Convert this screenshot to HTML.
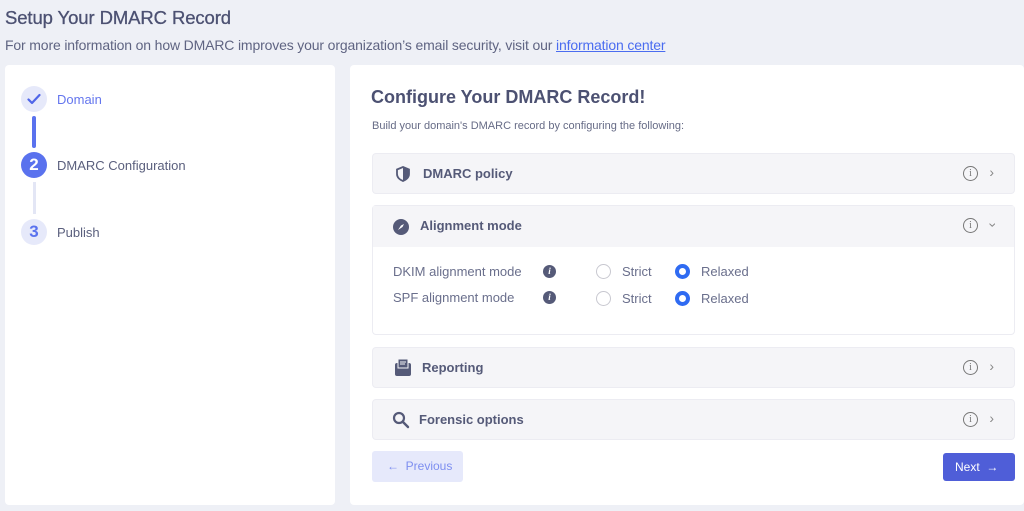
<!DOCTYPE html>
<html><head><meta charset="utf-8"><style>
*{box-sizing:border-box;margin:0;padding:0}
body{width:1024px;height:511px;background:#eef0f6;font-family:"Liberation Sans",sans-serif;color:#5a5f7d;position:relative;overflow:hidden}
.abs{position:absolute}
h1{position:absolute;left:5px;top:7px;font-size:18.5px;font-weight:normal;color:#4c5172;letter-spacing:-0.1px;-webkit-text-stroke:0.3px #4c5172}
.sub{position:absolute;left:5px;top:37px;font-size:14px;color:#5f6482;letter-spacing:-0.15px}
.sub a{color:#4a6cf0;text-decoration:underline}
.panel{position:absolute;background:#fff;border-radius:4px}
.step{position:absolute;left:21px;width:26px;height:26px;border-radius:50%;display:flex;align-items:center;justify-content:center;font-size:17px;font-weight:bold}
.slab{position:absolute;left:57px;font-size:13px;color:#5a5f7d}
.acc{position:absolute;left:372px;width:643px;background:#f5f5f8;border:1px solid #ececf2;border-radius:4px}
.acc .t{position:absolute;top:12px;font-size:13px;font-weight:bold;color:#555a78}
.info{position:absolute;right:36px;top:12px;width:15px;height:15px;border:1px solid #777;border-radius:50%;font-size:10px;text-align:center;line-height:13px;color:#777;font-family:"Liberation Serif",serif}
.chev{position:absolute;right:20px;top:10px;font-size:14px;color:#888}
.row{position:absolute;font-size:13px;color:#6a6f8c}
.ic{position:absolute;width:13px;height:13px;border-radius:50%;background:#555a78;color:#fff;font-size:9px;font-weight:bold;text-align:center;line-height:13px;font-style:italic;font-family:"Liberation Serif",serif}
.r{position:absolute;width:15px;height:15px;border-radius:50%}
.off{border:1px solid #c8c8d0;background:#fff}
.on{border:4px solid #2f6bf2;background:#fff}
</style></head><body>
<h1>Setup Your DMARC Record</h1>
<div class="sub">For more information on how DMARC improves your organization’s email security, visit our <a>information center</a></div>

<div class="panel" style="left:5px;top:65px;width:330px;height:440px"></div>
<div class="step" style="top:86px;background:#e6e9fa;color:#5a72ee">
<svg width="14" height="12" viewBox="0 0 14 12"><path d="M1.5 6.5 L5 10 L12.5 2" stroke="#5066e8" stroke-width="2.2" fill="none" stroke-linecap="round" stroke-linejoin="round"/></svg></div>
<div class="slab" style="top:92px;color:#6476ee">Domain</div>
<div class="abs" style="left:32px;top:116px;width:4px;height:32px;background:#5a72ee;border-radius:2px"></div>
<div class="step" style="top:152px;background:#5a72ee;color:#fff">2</div>
<div class="slab" style="top:158px">DMARC Configuration</div>
<div class="abs" style="left:33px;top:182px;width:3px;height:32px;background:#e3e6f5"></div>
<div class="step" style="top:219px;background:#e6e9fa;color:#5a72ee">3</div>
<div class="slab" style="top:225px">Publish</div>

<div class="panel" style="left:350px;top:65px;width:674px;height:440px"></div>
<div class="abs" style="left:371px;top:87px;font-size:18px;font-weight:bold;color:#4c5172">Configure Your DMARC Record!</div>
<div class="abs" style="left:372px;top:120px;font-size:11px;color:#666b86">Build your domain's DMARC record by configuring the following:</div>

<div class="acc" style="top:153px;height:41px">
<svg class="abs" style="left:23px;top:12px" width="14" height="16" viewBox="0 0 14 16"><path d="M7 1 L13 3.5 V8 C13 11.5 10 14 7 15 C4 14 1 11.5 1 8 V3.5 Z" fill="none" stroke="#555a78" stroke-width="1.8"/><path d="M7 1 L13 3.5 V8 C13 11.5 10 14 7 15 Z" fill="#555a78"/></svg>
<div class="t" style="left:50px">DMARC policy</div><div class="info">i</div><div class="chev">›</div></div>

<div class="acc" style="top:205px;height:130px;background:#fff">
<div class="abs" style="left:0;top:0;right:0;height:41px;background:#f5f5f8"></div>
<svg class="abs" style="left:20px;top:13px" width="16" height="16" viewBox="0 0 16 16"><circle cx="8" cy="8" r="8" fill="#555a78"/><path d="M5 11 L8 6.5 L11 5 L9.5 8 Z" fill="#fff"/></svg>
<div class="t" style="left:47px">Alignment mode</div><div class="info">i</div><div class="chev" style="transform:rotate(90deg);right:18px;top:11px">›</div>
<div class="row" style="left:20px;top:58px">DKIM alignment mode</div>
<div class="ic" style="left:170px;top:59px">i</div>
<div class="r off" style="left:223px;top:58px"></div><div class="row" style="left:249px;top:58px">Strict</div>
<div class="r on" style="left:302px;top:58px"></div><div class="row" style="left:328px;top:58px">Relaxed</div>
<div class="row" style="left:20px;top:84px">SPF alignment mode</div>
<div class="ic" style="left:170px;top:85px">i</div>
<div class="r off" style="left:223px;top:85px"></div><div class="row" style="left:249px;top:85px">Strict</div>
<div class="r on" style="left:302px;top:85px"></div><div class="row" style="left:328px;top:85px">Relaxed</div>
</div>

<div class="acc" style="top:347px;height:41px">
<svg class="abs" style="left:22px;top:10px" width="16" height="18" viewBox="0 0 16 18"><rect x="0" y="5" width="16" height="13" rx="2" fill="#555a78"/><rect x="3" y="1" width="10" height="9" fill="#555a78" stroke="#f5f5f8" stroke-width="1"/><path d="M5 4H11M5 6H10" stroke="#f5f5f8" stroke-width="1"/></svg>
<div class="t" style="left:49px">Reporting</div><div class="info">i</div><div class="chev">›</div></div>

<div class="acc" style="top:399px;height:41px">
<svg class="abs" style="left:19px;top:11px" width="18" height="18" viewBox="0 0 18 18"><circle cx="7" cy="7" r="5" fill="none" stroke="#555a78" stroke-width="2.2"/><path d="M11 11 L16 16" stroke="#555a78" stroke-width="2.4" stroke-linecap="round"/></svg>
<div class="t" style="left:46px">Forensic options</div><div class="info">i</div><div class="chev">›</div></div>

<div class="abs" style="left:372px;top:451px;width:91px;height:31px;background:#e6e9fb;border-radius:3px;color:#7d8ef0;font-size:12px;line-height:31px;padding-left:15px">←&nbsp;&nbsp;Previous</div>
<div class="abs" style="left:943px;top:453px;width:72px;height:28px;background:#4f5ed8;border-radius:3px;color:#fff;font-size:12px;line-height:28px;padding-left:12px">Next&nbsp;&nbsp;→</div>
</body></html>
